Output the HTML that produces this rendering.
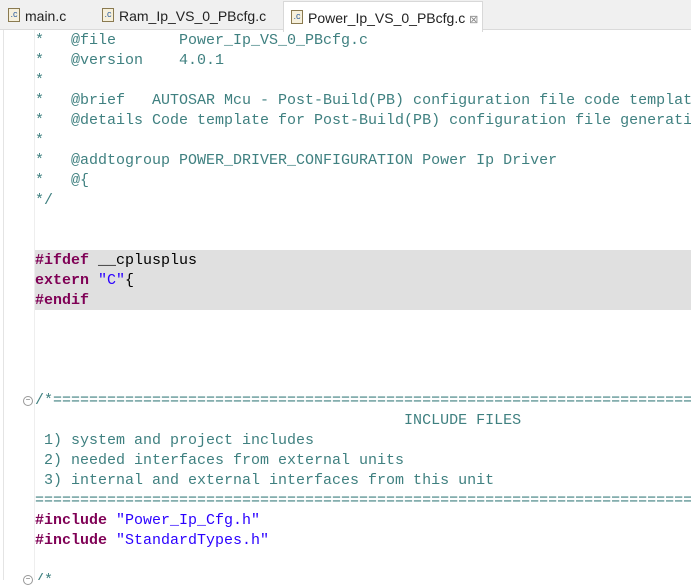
<!DOCTYPE html>
<html><head><style>
body{margin:0;width:691px;height:580px;overflow:hidden;background:#fff;position:relative;font-family:"Liberation Mono",monospace;}
.tabs{position:absolute;left:0;top:0;width:691px;height:30px;background:#f0f0f0;border-bottom:1px solid #dadada;box-sizing:border-box;font-family:"Liberation Sans",sans-serif;font-size:14px;color:#222;}
.tab{position:absolute;top:0;height:30px;line-height:33px;white-space:nowrap;}
.act{background:#fff;left:283px;width:200px;height:31px;border:1px solid #d8d8d8;border-bottom:none;box-sizing:border-box;top:1px;}
.ic{display:inline-block;width:10px;height:12px;border:1px solid #8a7a50;background:#f6f0dc;font-size:9px;line-height:11px;text-align:center;color:#3060a0;vertical-align:middle;margin-right:5px;position:relative;top:-2px;}
.gut{position:absolute;left:3px;top:30px;width:30px;height:550px;border-left:1px solid #e4e4e4;border-right:1px solid #eee;}
.code{position:absolute;left:35px;top:31px;width:656px;height:549px;overflow:hidden;font-size:15px;line-height:20px;white-space:pre;color:#3f8080;}
.band{position:absolute;left:35px;top:250px;width:656px;height:60px;background:#e0e0e0;}
.k{color:#7f0055;font-weight:bold}.s{color:#2a00ff}.n{color:#000}
.fold{position:absolute;left:23px;width:8px;height:8px;border:1px solid #999;border-radius:50%;font-size:8px;line-height:8px;text-align:center;color:#666;}
</style></head><body>
<div class="tabs">
<div class="tab" style="left:8px"><span class="ic">.c</span>main.c</div>
<div class="tab" style="left:102px"><span class="ic">.c</span>Ram_Ip_VS_0_PBcfg.c</div>
<div class="tab act" style="padding-left:7px;line-height:32px"><span class="ic">.c</span>Power_Ip_VS_0_PBcfg.c <span style="color:#888;font-size:11px">&#8864;</span></div>
</div>
<div class="gut"></div>
<div class="band"></div>
<div class="fold" style="top:396px">&#8722;</div>
<div class="fold" style="top:575px">&#8722;</div>
<div class="code">*   @file       Power_Ip_VS_0_PBcfg.c
*   @version    4.0.1
*
*   @brief   AUTOSAR Mcu - Post-Build(PB) configuration file code template.
*   @details Code template for Post-Build(PB) configuration file generation.
*
*   @addtogroup POWER_DRIVER_CONFIGURATION Power Ip Driver
*   @{
*/


<span class="k">#ifdef</span> <span class="n">__cplusplus</span>
<span class="k">extern</span> <span class="s">"C"</span><span class="n">{</span>
<span class="k">#endif</span>




/*==================================================================================================
                                         INCLUDE FILES
 1) system and project includes
 2) needed interfaces from external units
 3) internal and external interfaces from this unit
==================================================================================================
<span class="k">#include</span> <span class="s">"Power_Ip_Cfg.h"</span>
<span class="k">#include</span> <span class="s">"StandardTypes.h"</span>

/*
</div>
</body></html>
